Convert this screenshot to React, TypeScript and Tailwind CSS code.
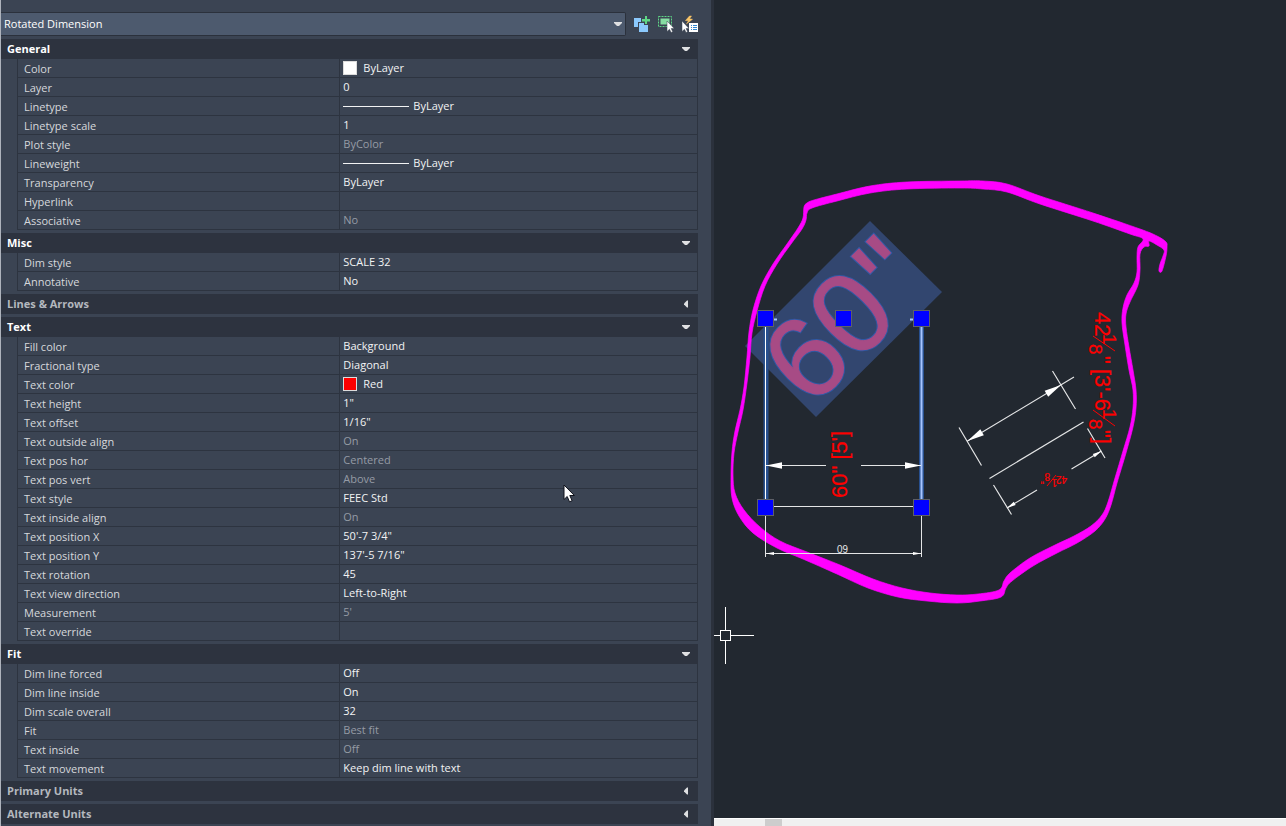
import React, { useState } from "react";

interface Property {
  name: string;
  value: string;
  readOnly?: boolean;
  swatch?: "white" | "red";
  line?: boolean;
}

interface Section {
  title: string;
  open: boolean;
  rows: Property[];
}

type Point = [number, number];

const sections: Section[] = [
  {
    title: "General",
    open: true,
    rows: [
      { name: "Color", value: "ByLayer", swatch: "white" },
      { name: "Layer", value: "0" },
      { name: "Linetype", value: "ByLayer", line: true },
      { name: "Linetype scale", value: "1" },
      { name: "Plot style", value: "ByColor", readOnly: true },
      { name: "Lineweight", value: "ByLayer", line: true },
      { name: "Transparency", value: "ByLayer" },
      { name: "Hyperlink", value: "" },
      { name: "Associative", value: "No", readOnly: true },
    ],
  },
  {
    title: "Misc",
    open: true,
    rows: [
      { name: "Dim style", value: "SCALE 32" },
      { name: "Annotative", value: "No" },
    ],
  },
  { title: "Lines & Arrows", open: false, rows: [] },
  {
    title: "Text",
    open: true,
    rows: [
      { name: "Fill color", value: "Background" },
      { name: "Fractional type", value: "Diagonal" },
      { name: "Text color", value: "Red", swatch: "red" },
      { name: "Text height", value: '1"' },
      { name: "Text offset", value: '1/16"' },
      { name: "Text outside align", value: "On", readOnly: true },
      { name: "Text pos hor", value: "Centered", readOnly: true },
      { name: "Text pos vert", value: "Above", readOnly: true },
      { name: "Text style", value: "FEEC Std" },
      { name: "Text inside align", value: "On", readOnly: true },
      { name: "Text position X", value: "50'-7 3/4\"" },
      { name: "Text position Y", value: "137'-5 7/16\"" },
      { name: "Text rotation", value: "45" },
      { name: "Text view direction", value: "Left-to-Right" },
      { name: "Measurement", value: "5'", readOnly: true },
      { name: "Text override", value: "" },
    ],
  },
  {
    title: "Fit",
    open: true,
    rows: [
      { name: "Dim line forced", value: "Off" },
      { name: "Dim line inside", value: "On" },
      { name: "Dim scale overall", value: "32" },
      { name: "Fit", value: "Best fit", readOnly: true },
      { name: "Text inside", value: "Off", readOnly: true },
      { name: "Text movement", value: "Keep dim line with text" },
    ],
  },
  { title: "Primary Units", open: false, rows: [] },
  { title: "Alternate Units", open: false, rows: [] },
];

// edges of the hand drawn marker loop
const markerOuter: Point[] = [
  [804, 207], [807, 203], [814, 200], [837, 194], [870, 186], [907, 182], [960, 181],
  [983, 181], [1007, 184], [1040, 196], [1093, 213], [1140, 229], [1157, 236],
  [1166, 242], [1167, 247], [1166, 256], [1162, 271], [1159, 271], [1160, 264],
  [1163, 256], [1164, 250], [1157, 245], [1149, 241], [1149, 246], [1144, 247],
  [1140, 254], [1140, 270], [1138, 285], [1130, 302], [1126, 314], [1126, 327],
  [1129, 347], [1133, 370], [1136, 390], [1136, 408], [1133, 427], [1126, 453],
  [1117, 483], [1111, 505], [1105, 519], [1095, 531], [1077, 543], [1057, 553],
  [1033, 566], [1012, 581], [1006, 588], [1001, 597], [980, 601], [957, 603],
  [927, 601], [898, 597], [868, 588], [837, 574], [803, 559], [777, 548],
  [753, 533], [739, 516], [732, 498], [731, 477], [732, 452], [735, 431],
  [740, 410], [744, 387], [747, 357], [749, 332], [753, 310], [761, 286],
  [773, 264], [787, 244], [798, 228], [803, 218],
];

const markerInner: Point[] = [
  [807, 213], [812, 208], [837, 201], [870, 193], [907, 189], [960, 188],
  [983, 189], [1007, 192], [1040, 204], [1093, 221], [1130, 234], [1143, 239],
  [1138, 247], [1137, 257], [1137, 272], [1134, 283], [1127, 295], [1123, 308],
  [1122, 323], [1125, 345], [1129, 370], [1133, 390], [1133, 408], [1130, 427],
  [1123, 451], [1115, 478], [1108, 502], [1102, 515], [1091, 526], [1074, 536],
  [1053, 546], [1030, 558], [1010, 573], [1004, 581], [999, 590], [978, 594],
  [957, 595], [930, 593], [902, 588], [873, 579], [840, 565], [807, 552],
  [780, 541], [760, 527], [744, 510], [735, 493], [733, 475], [734, 453],
  [738, 432], [743, 410], [747, 383], [750, 357], [752, 333], [757, 311],
  [765, 286], [777, 264], [791, 244], [802, 229], [806, 220],
];

// closed Catmull-Rom curve through the points
const smoothPath = (points: Point[]) => {
  const n = points.length;
  let d = `M${points[0][0]} ${points[0][1]}`;
  for (let i = 0; i < n; i++) {
    const a = points[(i + n - 1) % n];
    const b = points[i];
    const c = points[(i + 1) % n];
    const e = points[(i + 2) % n];
    d += `C${b[0] + (c[0] - a[0]) / 6} ${b[1] + (c[1] - a[1]) / 6} ${
      c[0] - (e[0] - b[0]) / 6
    } ${c[1] - (e[1] - b[1]) / 6} ${c[0]} ${c[1]}`;
  }
  return d + "Z";
};

const Cursor: React.FC<{ className?: string }> = ({ className }) => (
  <svg width="13" height="20" viewBox="0 0 13 20" className={className} aria-hidden="true">
    <path
      d="M1 1v14.5l3.2-3 2.3 5.3 2.6-1.1-2.3-5.2h4.6z"
      fill="white"
      stroke="#10131c"
      strokeWidth="1"
    />
  </svg>
);

const DownArrow = () => (
  <svg width="8" height="4" viewBox="0 0 8 4" aria-hidden="true">
    <path d="M0 0h8v1L5 4H3L0 1z" fill="#dfe0e2" />
  </svg>
);

const LeftArrow = () => (
  <svg width="8" height="8" viewBox="0 0 8 8" aria-hidden="true">
    <path d="M6 0.5v7H5L2 4.5v-1L5 0.5z" fill="#dfe0e2" />
  </svg>
);

const PickAddIcon = () => (
  <svg width="24" height="24" viewBox="0 0 24 24" aria-hidden="true">
    <path d="M4 6h7v4H8v5H4z" fill="#8bc9fd" />
    <path d="M9 11h5v2h4v7H9z" fill="#8bc9fd" />
    <path d="M15 4h2v3h3v2.500h-3V12h-2V9.500h-3V7h3z" fill="#5fd686" />
  </svg>
);

const SelectObjectsIcon = () => (
  <svg width="24" height="24" viewBox="0 0 24 24" aria-hidden="true">
    <rect x="4.500" y="4.500" width="13" height="10" fill="none" stroke="#5fd686" strokeDasharray="2 1" />
    <path d="M6.500 6.500h9v6h-9z" fill="#86dda2" />
    <path d="M13 9v10.500l2.500-2.200 1.600 3.200 1.600-.8-1.500-3.200h3z" fill="white" stroke="#3b4453" strokeWidth="0.500" />
  </svg>
);

const QuickSelectIcon = () => (
  <svg width="24" height="24" viewBox="0 0 24 24" aria-hidden="true">
    <path d="M11.500 4L7.500 8.500l3 .3-2 3L14.500 7.300l-3-.5L13.500 4z" fill="#fbc668" stroke="#fbc668" strokeWidth="0.500" />
    <path d="M4 9v10.500l2.500-2.200L8 20.500l1.600-.8-1.500-3.200h3z" fill="white" stroke="#3b4453" strokeWidth="0.500" />
    <path d="M11 11h9v9h-9z" fill="white" />
    <path d="M13 13.500h1m1 0h4M13 15.500h1m1 0h4M13 17.500h1m1 0h4" stroke="#2f86d2" />
  </svg>
);

const PropertyRow: React.FC<{ row: Property }> = ({ row }) => (
  <tr>
    <th
      scope="row"
      className="h-[19px] truncate border-b border-l border-[#2d3440] p-0 pt-px pl-1.5 text-left font-normal text-[#d6d8dc]"
    >
      {row.name}
    </th>
    <td
      className={`h-[19px] border-x border-b border-[#2d3440] p-0 pl-[3px] ${
        row.readOnly ? "text-[#959ba5]" : "text-[#f2f3f4]"
      }`}
    >
      <div className="flex items-center">
        {row.swatch && (
          <span
            className={`mr-1.5 size-3.5 border border-[#dcdcdc] ${
              row.swatch === "red" ? "bg-[#ff0000]" : "bg-white"
            }`}
          />
        )}
        {row.line && <span className="mr-1 h-px w-[66px] bg-[#f2f3f4]" />}
        {row.value}
      </div>
    </td>
  </tr>
);

const PropertySection: React.FC<{ section: Section }> = ({ section }) => {
  const [open, setOpen] = useState<boolean>(section.open);

  return (
    <section>
      <button
        type="button"
        aria-expanded={open}
        onClick={() => setOpen(!open)}
        className={`flex h-5 w-full items-center justify-between bg-[#2d333f] pr-2 pl-1.5 text-left font-bold ${
          open ? "text-white" : "text-[#b4b8be]"
        }`}
      >
        {section.title}
        {open ? <DownArrow /> : <LeftArrow />}
      </button>
      {open && (
        <div className="pl-4">
          <table className="w-full table-fixed border-separate border-spacing-0">
            <colgroup>
              <col className="w-[47.3%]" />
              <col />
            </colgroup>
            <tbody>
              {section.rows.map((row) => (
                <PropertyRow key={row.name} row={row} />
              ))}
            </tbody>
          </table>
        </div>
      )}
    </section>
  );
};

const Grip: React.FC<{ x: number; y: number }> = ({ x, y }) => (
  <rect x={x - 8} y={y - 8} width="16" height="16" fill="#0000ff" stroke="#5d5f68" />
);

const Arrow: React.FC<{ x: number; y: number; angle: number; size: number }> = ({
  x,
  y,
  angle,
  size,
}) => (
  <path
    d={`M0 0L${size} ${-size / 5}V${size / 5}z`}
    fill="white"
    transform={`translate(${x} ${y}) rotate(${angle})`}
  />
);

const Drawing = () => (
  <svg className="w-full flex-1" role="img" aria-label="Model space">
    <g transform="translate(-714 0)" fontFamily="'Liberation Sans', Arial, sans-serif">
      {/* selected dimension text */}
      <path d="M870 221L942 292L816 417L745 346z" fill="#32466f" />
      <g fontSize="115" transform="translate(811 409) rotate(-45)">
        <text stroke="#3159a5" strokeWidth="3" aria-hidden="true" fill="none">
          60<tspan dx="4">"</tspan>
        </text>
        <text stroke="#a74b85" strokeWidth="1" fill="#a74b85">
          60<tspan dx="4">"</tspan>
        </text>
      </g>

      <path
        d={smoothPath(markerOuter) + smoothPath(markerInner)}
        fill="#ff00ff"
        fillRule="evenodd"
        stroke="#ff00ff"
        strokeWidth="0.700"
      />

      {/* highlighted extension lines */}
      <path d="M766 319V507M921.500 319V507" stroke="#28508f" strokeWidth="5" />
      <path d="M774 319.500h3M910 319.500h3" stroke="#a9c6ff" strokeWidth="2" />
      <path d="M765.500 319V507" stroke="white" />
      <path d="M921.500 319V507" stroke="#a9c6ff" strokeWidth="2" />

      <g stroke="#e4e5e6" fill="none">
        <path d="M766 465.500H826M861 465.500H921" />
        <path d="M774 506.500H913" />
        <path d="M765.500 516V557M921.500 516V557M766 553.500H921" />
        <path d="M1052.500 371L1075.500 409M959 427.500L981.500 465.500M967.500 441L1074 377" strokeWidth="1.200" />
        <path d="M989.500 478.500L1083.500 422" strokeWidth="1.200" />
        <path d="M993.500 485L1011.500 514.500M1087.500 428.500L1105 458" strokeWidth="1.200" />
        <path d="M1007 508L1037 490M1071.500 469L1101.500 451" strokeWidth="1.200" />
      </g>
      <Arrow x={766} y={465.5} angle={0} size={16} />
      <Arrow x={921} y={465.5} angle={180} size={16} />
      <Arrow x={766} y={553.5} angle={0} size={8} />
      <Arrow x={921} y={553.5} angle={180} size={8} />
      <Arrow x={967.5} y={441} angle={-31} size={17} />
      <Arrow x={1061} y={385} angle={149} size={17} />
      <Arrow x={1007} y={508} angle={-31} size={9} />
      <Arrow x={1101.5} y={451} angle={149} size={9} />

      <Grip x={765.5} y={318.5} />
      <Grip x={843.5} y={318.5} />
      <Grip x={921.5} y={318.5} />
      <Grip x={765.5} y={507.5} />
      <Grip x={921.5} y={507.5} />

      <text transform="translate(847 498) rotate(-90)" fontSize="22" fill="#ff0000" stroke="#ff0000" strokeWidth="0.200">
        60" [5']
      </text>
      <text transform="translate(848 545) rotate(180)" fontSize="10" fill="#e4e5e6">
        60
      </text>

      <g
        transform="translate(1095 312) rotate(90)"
        fontSize="22"
        fill="#ff0000"
        stroke="#ff0000"
        strokeWidth="0.200"
      >
        <text>42</text>
        <text x="22" y="-8" fontSize="19">1</text>
        <text x="32" y="6" fontSize="19">8</text>
        <text x="44">"</text>
        <text x="57">[3'-6</text>
        <text x="97" y="-8" fontSize="19">1</text>
        <text x="107" y="6" fontSize="19">8</text>
        <text x="118">"]</text>
        <path d="M24 2L39 -20M98 2L114 -20" strokeWidth="1" />
      </g>
      <g transform="translate(1067 476) rotate(180)" fontSize="10" fill="#ff0000" stroke="#ff0000" strokeWidth="0.200">
        <text>42</text>
        <text x="10" y="-3" fontSize="10">1</text>
        <text x="17" y="3" fontSize="10">8</text>
        <text x="23">"</text>
        <path d="M11 1L20 -10" strokeWidth="1" />
      </g>

      {/* crosshair */}
      <g stroke="white" fill="none">
        <rect x="720.500" y="630.500" width="10" height="10" />
        <path d="M714 635.500h6M731 635.500h23M725.500 607v23M725.500 641v23" />
      </g>
    </g>
  </svg>
);

const toolButtons = [
  { label: "Toggle value of PICKADD", icon: <PickAddIcon /> },
  { label: "Select objects", icon: <SelectObjectsIcon /> },
  { label: "Quick select", icon: <QuickSelectIcon /> },
];

const App = () => {
  return (
    <div className="relative flex min-h-screen bg-[#222830] font-['Open_Sans','Noto_Sans',sans-serif] text-[11px] leading-4">
      <aside className="w-5/9 shrink-0 border-r-3 border-[#2b313c] bg-[#3b4453]">
        <div className="h-full border-l border-[#aeb3bc]">
          <div className="flex items-center pt-3 pr-[9px] pb-[3px]">
            <div className="relative mr-1 flex-1">
              <select
                aria-label="Object type"
                className="block h-6 w-full appearance-none rounded-r-xs border-y border-r border-[#2b313c] bg-[#4d5a6e] pl-[3px] text-white"
              >
                <option>Rotated Dimension</option>
              </select>
              <span className="pointer-events-none absolute inset-y-0 right-1 flex items-center">
                <DownArrow />
              </span>
            </div>
            {toolButtons.map((tool) => (
              <button key={tool.label} type="button" aria-label={tool.label} className="size-6">
                {tool.icon}
              </button>
            ))}
          </div>
          <div className="flex flex-col gap-[3px] pr-[13px]">
            {sections.map((section) => (
              <PropertySection key={section.title} section={section} />
            ))}
          </div>
        </div>
      </aside>
      <main className="flex min-w-0 flex-1 flex-col">
        <Drawing />
        <div className="h-2 border-t border-white bg-[#f0f0f0] pl-[51px]">
          <div className="h-full w-[17px] bg-[#cdcdcd]" />
        </div>
      </main>
      <Cursor className="absolute top-[484px] left-[563px]" />
    </div>
  );
};

export default App;
